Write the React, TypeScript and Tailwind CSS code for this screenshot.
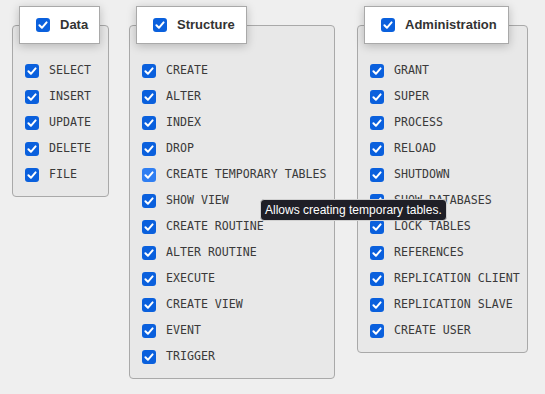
import React from "react";

type Group = {
  title: string;
  width: string;
  ml: string;
  items: string[];
};

const groups: Group[] = [
  { title: "Data", width: "w-[97px]", ml: "ml-0", items: ["SELECT", "INSERT", "UPDATE", "DELETE", "FILE"] },
  {
    title: "Structure",
    width: "w-[206px]",
    ml: "ml-[20px]",
    items: [
      "CREATE",
      "ALTER",
      "INDEX",
      "DROP",
      "CREATE TEMPORARY TABLES",
      "SHOW VIEW",
      "CREATE ROUTINE",
      "ALTER ROUTINE",
      "EXECUTE",
      "CREATE VIEW",
      "EVENT",
      "TRIGGER",
    ],
  },
  {
    title: "Administration",
    width: "w-[171px]",
    ml: "ml-[22px]",
    items: [
      "GRANT",
      "SUPER",
      "PROCESS",
      "RELOAD",
      "SHUTDOWN",
      "SHOW DATABASES",
      "LOCK TABLES",
      "REFERENCES",
      "REPLICATION CLIENT",
      "REPLICATION SLAVE",
      "CREATE USER",
    ],
  },
];

function Check({ hover }: { hover?: boolean }) {
  return (
    <span
      className={
        "flex h-[14px] w-[14px] shrink-0 items-center justify-center rounded-[3px] " +
        (hover ? "bg-[#2f7ef2]" : "bg-[#0a60dd]")
      }
    >
      <svg width="14" height="14" viewBox="0 0 14 14">
        <path d="M3.4 7.3 L5.9 9.8 L10.6 4.4" fill="none" stroke="#fff" strokeWidth="2" strokeLinecap="round" strokeLinejoin="round" />
      </svg>
    </span>
  );
}

function PrivGroup({ g }: { g: Group }) {
  return (
    <div className={"flex flex-col " + g.ml}>
      <div className="relative z-10 ml-[7px] flex h-[38px] items-center self-start border border-[#a9a9a9] bg-white pl-[16px] pr-[11px] shadow-[0_2px_9px_rgba(0,0,0,0.22)]">
        <Check />
        <span className="ml-[10px] font-['Liberation_Sans',Arial,sans-serif] text-[13px] font-bold text-[#333]">{g.title}</span>
      </div>
      <div className={"-mt-[19px] rounded-[4px] border border-[#a9a9a9] bg-[#e8e8e8] px-[12px] pt-[32px] pb-[8px] " + g.width}>
        {g.items.map((it) => (
          <div key={it} className="flex h-[26px] items-center">
            <Check hover={it === "CREATE TEMPORARY TABLES"} />
            <span className="ml-[10px] whitespace-nowrap font-['DejaVu_Sans_Mono',monospace] text-[11.6px] text-[#3a3a3a]">{it}</span>
          </div>
        ))}
      </div>
    </div>
  );
}

export default function App() {
  return (
    <div className="relative h-[394px] w-[545px] overflow-hidden bg-[#efefef]">
      <div className="flex items-start pl-[12px] pt-[6px]">
        {groups.map((g) => (
          <PrivGroup key={g.title} g={g} />
        ))}
      </div>
      <div className="absolute left-[260px] top-[199px] z-20 flex h-[22px] items-center rounded-[4px] border border-[#d0d0d0] bg-[#1f1f27] px-[4px] font-['Liberation_Sans',Arial,sans-serif] text-[12px] whitespace-nowrap text-white">
        Allows creating temporary tables.
      </div>
    </div>
  );
}
